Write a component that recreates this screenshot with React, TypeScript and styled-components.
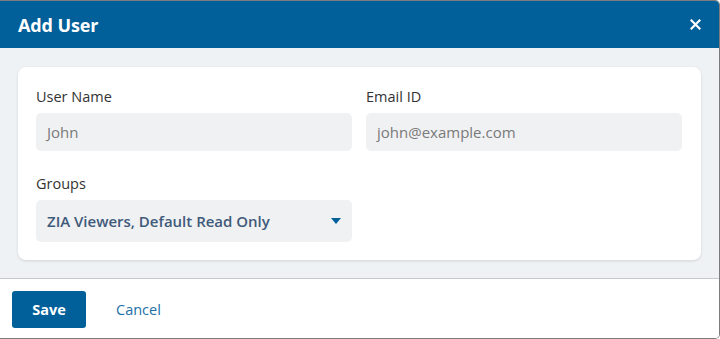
import React from "react";
import styled, { createGlobalStyle } from "styled-components";

const BLUE = "#01609a";

const GlobalStyle = createGlobalStyle`
  html, body {
    margin: 0;
    padding: 0;
    background: #ffffff;
  }
  body {
    font-family: "Open Sans", "Noto Sans", sans-serif;
  }
  * {
    box-sizing: border-box;
  }
`;

const Modal = styled.div`
  width: 720px;
  height: 339px;
  display: flex;
  flex-direction: column;
  background: #ffffff;
  border: 1px solid #7c7c7c;
  border-left: none;
  border-radius: 0 5px 5px 0;
  overflow: hidden;
`;

const Header = styled.div`
  height: 47px;
  flex-shrink: 0;
  display: flex;
  align-items: center;
  justify-content: space-between;
  padding: 0 18px;
  background: ${BLUE};
  color: #ffffff;
`;

const Title = styled.h1`
  margin: 0;
  font-size: 18px;
  font-weight: 700;
  letter-spacing: -0.1px;
`;

const CloseButton = styled.button`
  border: none;
  background: none;
  padding: 0;
  display: flex;
  align-items: center;
  cursor: pointer;
`;

const Body = styled.div`
  flex: 1;
  background: #eef2f5;
  padding: 19px 18px 18px 18px;
  border-bottom: 1px solid #c5c9cd;
`;

const Card = styled.div`
  background: #ffffff;
  border-radius: 8px;
  box-shadow: 0 1px 3px rgba(0, 0, 0, 0.12);
  padding: 20px 18px 18px 18px;
  display: grid;
  grid-template-columns: 316px 316px;
  column-gap: 14px;
  row-gap: 23px;
`;

const Field = styled.div`
  display: flex;
  flex-direction: column;
`;

const Label = styled.label`
  font-size: 14.5px;
  line-height: 20px;
  color: #333333;
  margin-bottom: 6px;
`;

const Input = styled.div<{ $tall?: boolean }>`
  height: ${(p) => (p.$tall ? "42px" : "38px")};
  border-radius: 5px;
  background: #f0f1f3;
  display: flex;
  align-items: center;
  justify-content: space-between;
  padding: 0 11px 0 11px;
  font-size: 15px;
  color: #7a7a7a;
`;

const SelectValue = styled.span`
  font-weight: 600;
  color: #3f5a7a;
`;

const Footer = styled.div`
  height: 60px;
  flex-shrink: 0;
  display: flex;
  align-items: center;
  gap: 30px;
  padding: 0 12px;
  background: #ffffff;
`;

const SaveButton = styled.button`
  width: 74px;
  height: 37px;
  border: none;
  border-radius: 3px;
  background: ${BLUE};
  color: #ffffff;
  font-family: inherit;
  font-size: 14.5px;
  font-weight: 700;
  cursor: pointer;
`;

const CancelLink = styled.button`
  border: none;
  background: none;
  padding: 0;
  font-family: inherit;
  font-size: 14.5px;
  color: #2170a8;
  cursor: pointer;
`;

export default function App() {
  return (
    <>
      <GlobalStyle />
      <Modal>
        <Header>
          <Title>Add User</Title>
          <CloseButton aria-label="Close">
            <svg width="11" height="11" viewBox="0 0 11 11">
              <path d="M1.5 1.5 L9.5 9.5 M9.5 1.5 L1.5 9.5" stroke="#ffffff" strokeWidth="2.2" strokeLinecap="square" />
            </svg>
          </CloseButton>
        </Header>
        <Body>
          <Card>
            <Field>
              <Label>User Name</Label>
              <Input>John</Input>
            </Field>
            <Field>
              <Label>Email ID</Label>
              <Input>john@example.com</Input>
            </Field>
            <Field>
              <Label>Groups</Label>
              <Input $tall>
                <SelectValue>ZIA Viewers, Default Read Only</SelectValue>
                <svg width="10" height="6" viewBox="0 0 10 6">
                  <path d="M0 0 H10 L5 6 Z" fill={BLUE} />
                </svg>
              </Input>
            </Field>
          </Card>
        </Body>
        <Footer>
          <SaveButton>Save</SaveButton>
          <CancelLink>Cancel</CancelLink>
        </Footer>
      </Modal>
    </>
  );
}
